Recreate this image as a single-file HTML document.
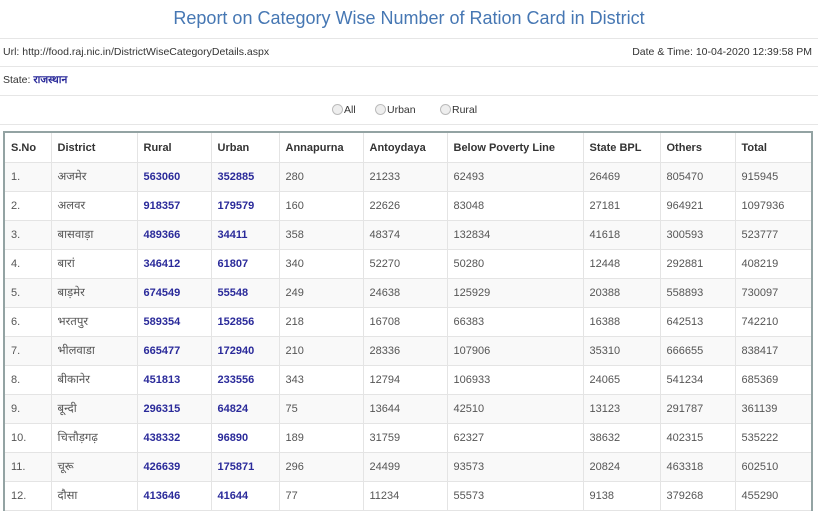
<!DOCTYPE html>
<html><head><meta charset="utf-8"><style>
body{margin:0;width:818px;height:504px;overflow:hidden;background:#fff;font-family:"Liberation Sans","Noto Sans CJK SC",sans-serif;color:#333}
.t{position:absolute;top:8px;left:0;width:818px;text-align:center;font-size:18px;color:#4677b3}
.line{position:absolute;left:0;width:818px;height:1px;background:#e6e6e6}
.s{position:absolute;font-size:10.5px;color:#333}
table{position:absolute;left:3px;top:131px;width:810px;border-collapse:collapse;border:2px solid #93a3a3;border-bottom:none;font-size:11px;table-layout:fixed}
td,th{border:1px solid #e4e4e4;padding:0 0 0 6px;height:28px;line-height:12px;text-align:left;color:#555;font-weight:normal;white-space:nowrap;vertical-align:middle}
th{height:29px;color:#333;font-weight:bold}
tr:nth-child(even) td{background:#f9f9f9}
td.b{color:#2a2a9a;font-weight:bold}
td.h span{display:inline-block;font-size:11.5px;line-height:12px;position:relative;top:0px}
.r{display:inline-block;width:9px;height:9px;border-radius:50%;border:1px solid #bbb;background:#eee;vertical-align:-2px;margin-right:1px}
</style></head><body>
<div class="t">Report on Category Wise Number of Ration Card in District</div>
<div class="line" style="top:38px"></div>
<div class="s" style="left:3px;top:46px">Url: http://food.raj.nic.in/DistrictWiseCategoryDetails.aspx</div>
<div class="s" style="right:6px;top:46px">Date &amp; Time: 10-04-2020 12:39:58 PM</div>
<div class="line" style="top:66px"></div>
<div class="s" style="left:3px;top:73px">State: <b style="color:#2a2a9a">राजस्थान</b></div>
<div class="line" style="top:95px"></div>
<div class="s" style="left:332px;top:104px"><span class="r"></span>All</div>
<div class="s" style="left:375px;top:104px"><span class="r"></span>Urban</div>
<div class="s" style="left:440px;top:104px"><span class="r"></span>Rural</div>
<div class="line" style="top:124px"></div>
<table>
<colgroup><col style="width:47px"><col style="width:86px"><col style="width:74px"><col style="width:68px"><col style="width:84px"><col style="width:84px"><col style="width:136px"><col style="width:77px"><col style="width:75px"><col></colgroup>
<tr><th>S.No</th><th>District</th><th>Rural</th><th>Urban</th><th>Annapurna</th><th>Antoydaya</th><th>Below Poverty Line</th><th>State BPL</th><th>Others</th><th>Total</th></tr>
<tr><td>1.</td><td class="h"><span>अजमेर</span></td><td class="b">563060</td><td class="b">352885</td><td>280</td><td>21233</td><td>62493</td><td>26469</td><td>805470</td><td>915945</td></tr>
<tr><td>2.</td><td class="h"><span>अलवर</span></td><td class="b">918357</td><td class="b">179579</td><td>160</td><td>22626</td><td>83048</td><td>27181</td><td>964921</td><td>1097936</td></tr>
<tr><td>3.</td><td class="h"><span>बासवाड़ा</span></td><td class="b">489366</td><td class="b">34411</td><td>358</td><td>48374</td><td>132834</td><td>41618</td><td>300593</td><td>523777</td></tr>
<tr><td>4.</td><td class="h"><span>बारां</span></td><td class="b">346412</td><td class="b">61807</td><td>340</td><td>52270</td><td>50280</td><td>12448</td><td>292881</td><td>408219</td></tr>
<tr><td>5.</td><td class="h"><span>बाड़मेर</span></td><td class="b">674549</td><td class="b">55548</td><td>249</td><td>24638</td><td>125929</td><td>20388</td><td>558893</td><td>730097</td></tr>
<tr><td>6.</td><td class="h"><span>भरतपुर</span></td><td class="b">589354</td><td class="b">152856</td><td>218</td><td>16708</td><td>66383</td><td>16388</td><td>642513</td><td>742210</td></tr>
<tr><td>7.</td><td class="h"><span>भीलवाडा</span></td><td class="b">665477</td><td class="b">172940</td><td>210</td><td>28336</td><td>107906</td><td>35310</td><td>666655</td><td>838417</td></tr>
<tr><td>8.</td><td class="h"><span>बीकानेर</span></td><td class="b">451813</td><td class="b">233556</td><td>343</td><td>12794</td><td>106933</td><td>24065</td><td>541234</td><td>685369</td></tr>
<tr><td>9.</td><td class="h"><span>बून्दी</span></td><td class="b">296315</td><td class="b">64824</td><td>75</td><td>13644</td><td>42510</td><td>13123</td><td>291787</td><td>361139</td></tr>
<tr><td>10.</td><td class="h"><span>चित्तौड़गढ़</span></td><td class="b">438332</td><td class="b">96890</td><td>189</td><td>31759</td><td>62327</td><td>38632</td><td>402315</td><td>535222</td></tr>
<tr><td>11.</td><td class="h"><span>चूरू</span></td><td class="b">426639</td><td class="b">175871</td><td>296</td><td>24499</td><td>93573</td><td>20824</td><td>463318</td><td>602510</td></tr>
<tr><td>12.</td><td class="h"><span>दौसा</span></td><td class="b">413646</td><td class="b">41644</td><td>77</td><td>11234</td><td>55573</td><td>9138</td><td>379268</td><td>455290</td></tr>
</table>
</body></html>
